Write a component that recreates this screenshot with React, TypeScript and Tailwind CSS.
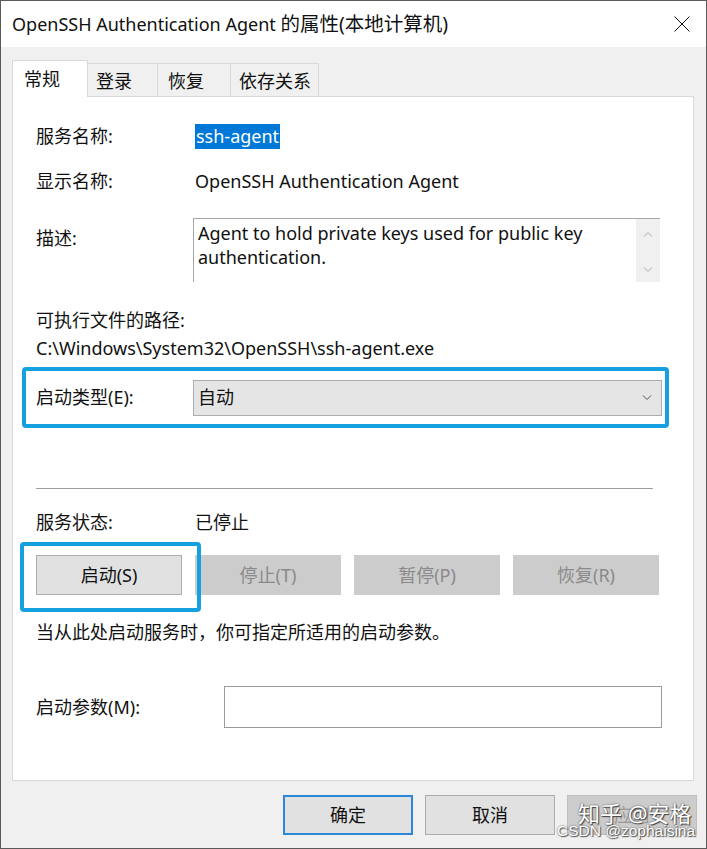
import React from 'react';

const FONT = "font-['Noto_Sans','Noto_Sans_CJK_SC',sans-serif]";

const TABS = [
  { label: '登录', w: 'w-[70px]', pl: 'pl-[8px]' },
  { label: '恢复', w: 'w-[73px]', pl: 'pl-[10px]' },
  { label: '依存关系', w: 'w-[88px]', pl: 'pl-[8px]' },
];

function Chevron({ up = false }: { up?: boolean }) {
  return (
    <svg width="10" height="6" viewBox="0 0 10 6" className="block">
      <path d={up ? 'M1 5.5 L5 1.5 L9 5.5' : 'M1 0.5 L5 4.5 L9 0.5'} fill="none" stroke="#a6a6a6" strokeWidth="1" />
    </svg>
  );
}

export default function App() {
  return (
    <div className={`${FONT} relative w-[707px] h-[849px] overflow-hidden bg-[#f0f0f0] border border-[#5a5a5a] text-[18px] text-[#111] flex flex-col`}>
      {/* Title bar */}
      <div className="h-[46px] bg-white flex items-center justify-between pl-[11px] pr-[16px] shrink-0">
        <span className="leading-none">
          OpenSSH Authentication Agent <span className="text-[19.5px]">的属性(本地计算机)</span>
        </span>
        <svg width="16" height="16" viewBox="0 0 16 16">
          <path d="M0.5 0.5 L15.5 15.5 M15.5 0.5 L0.5 15.5" stroke="#111" strokeWidth="1" />
        </svg>
      </div>

      <div className="px-[11px] pt-[13px]">
        {/* Tabs */}
        <div className="flex items-end h-[36px]">
          <div className="relative z-10 w-[76px] h-[37px] -mb-px bg-white border-l border-t border-r border-[#d9d9d9] flex items-center pl-[11px]">
            常规
          </div>
          {TABS.map((t) => (
            <div key={t.label} className={`${t.w} ${t.pl} h-[33px] border-t border-r border-[#d9d9d9] flex items-center pt-[3px]`}>
              {t.label}
            </div>
          ))}
        </div>

        {/* Panel */}
        <div className="w-[682px] h-[685px] bg-white border border-[#d9d9d9] pl-[23px] flex flex-col">
          <div className="mt-[27px] h-[25px] flex items-center">
            <span className="w-[159px]">服务名称:</span>
            <span className="h-[25px] flex items-center bg-[#0078d7] text-white px-[1px]">ssh-agent</span>
          </div>
          <div className="mt-[20px] h-[25px] flex items-center">
            <span className="w-[159px]">显示名称:</span>
            <span>OpenSSH Authentication Agent</span>
          </div>

          <div className="mt-[24px] flex">
            <span className="w-[157px] pt-[8px] leading-[24px]">描述:</span>
            <div className="w-[467px] h-[64px] border-t border-l border-[#a6a6a6] flex">
              <div className="flex-1 pl-[4px] pt-[2px] leading-[24px] whitespace-nowrap">
                Agent to hold private keys used for public key
                <br />
                authentication.
              </div>
              <div className="w-[24px] bg-[#f0f0f0] flex flex-col items-center pt-[12px] gap-[30px]">
                <Chevron up />
                <Chevron />
              </div>
            </div>
          </div>

          <div className="mt-[26px] h-[24px] flex items-center">可执行文件的路径:</div>
          <div className="mt-[4px] h-[24px] flex items-center">C:\Windows\System32\OpenSSH\ssh-agent.exe</div>

          {/* Startup type, framed */}
          <div className="mt-[7px] -ml-[14px] w-[647px] h-[61px] border-4 border-[#15a0e0] rounded-[4px] flex items-center pl-[10px]">
            <span className="w-[157px]">启动类型(E):</span>
            <div className="w-[469px] h-[36px] bg-[#e5e5e5] border border-[#adadad] flex items-center justify-between pl-[4px] pr-[9px]">
              <span>自动</span>
              <svg width="10" height="6" viewBox="0 0 10 6">
                <path d="M1 0.5 L5 4.5 L9 0.5" fill="none" stroke="#555" strokeWidth="1" />
              </svg>
            </div>
          </div>

          <div className="mt-[60px] h-px w-[617px] bg-[#a0a0a0]" />

          <div className="mt-[21px] h-[24px] flex items-center">
            <span className="w-[159px]">服务状态:</span>
            <span>已停止</span>
          </div>

          <div className="mt-[21px] flex gap-[13px]">
            <div className="relative">
              <div className="w-[146px] h-[40px] bg-[#e1e1e1] border border-[#adadad] flex items-center justify-center">启动(S)</div>
              <div className="absolute -left-[16px] -top-[13px] w-[181px] h-[70px] border-4 border-[#15a0e0] rounded-[4px]" />
            </div>
            {['停止(T)', '暂停(P)', '恢复(R)'].map((b) => (
              <div key={b} className="w-[146px] h-[40px] bg-[#cccccc] border border-[#cccccc] text-[#8a8a8a] flex items-center justify-center">
                {b}
              </div>
            ))}
          </div>

          <div className="mt-[25px] h-[24px] flex items-center">当从此处启动服务时，你可指定所适用的启动参数。</div>

          <div className="mt-[42px] h-[42px] flex items-center">
            <span className="w-[188px]">启动参数(M):</span>
            <div className="w-[438px] h-[42px] bg-white border border-[#9a9a9a]" />
          </div>
        </div>

        {/* Dialog buttons */}
        <div className="mt-[14px] -mr-[2px] flex justify-end gap-[12px]">
          <div className="w-[130px] h-[40px] bg-[#e1e1e1] border-2 border-[#2b88d8] flex items-center justify-center">确定</div>
          <div className="w-[130px] h-[40px] bg-[#e1e1e1] border border-[#adadad] flex items-center justify-center">取消</div>
          <div className="w-[130px] h-[40px] bg-[#cccccc] border border-[#bfbfbf] text-[#9a9a9a] flex items-center justify-center">应用</div>
        </div>
      </div>

      {/* Watermark */}
      <div className="absolute left-[577px] top-[801px] text-[22px] leading-none text-white [text-shadow:0_0_2px_#444,1px_1px_1px_#444]">知乎 @安格</div>
      <div className="absolute left-[556px] top-[822px] text-[15.5px] leading-none text-white [text-shadow:0_0_2px_#555,1px_1px_1px_#555] font-['Liberation_Sans',sans-serif]">CSDN @zophaisina</div>
    </div>
  );
}
